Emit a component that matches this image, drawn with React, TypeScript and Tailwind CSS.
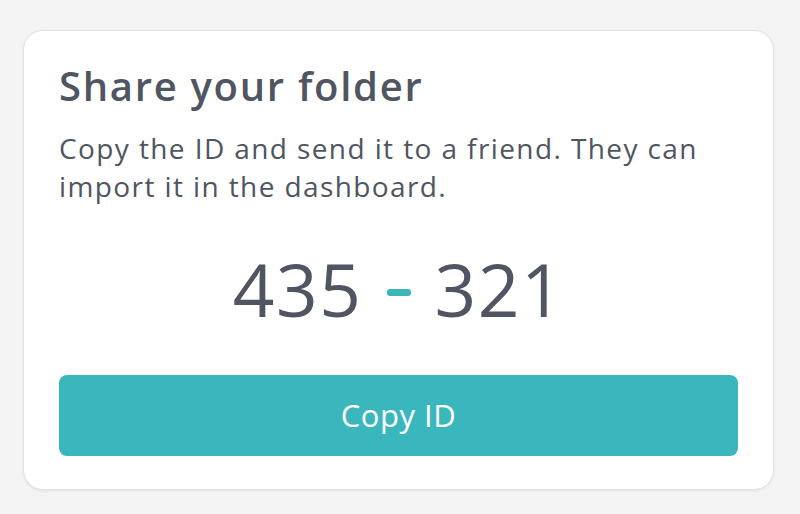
export default function App() {
  return (
    <div className="min-h-screen bg-[#f4f4f4] px-[23px] pt-[30px] font-['Open_Sans',sans-serif] text-[#4f5561]">
      <div className="w-[751px] h-[460px] rounded-[20px] bg-white border border-[#e2e2e2] shadow-[0_1px_3px_rgba(0,0,0,0.08)] px-[35px] pt-[31px]">
        <h1 className="text-[40px] leading-[48px] font-[560] tracking-[1.7px]">Share your folder</h1>
        <p className="mt-[19px] text-[28px] leading-[38px] tracking-[1.4px]">
          Copy the ID and send it to a friend. They can import it in the dashboard.
        </p>
        <div className="mt-[47px] flex items-center justify-center text-[73px] leading-[73px] tracking-[1.5px]">
          <span>435</span>
          <span className="mx-[24px] mt-[8px] inline-block w-[24px] h-[7px] rounded-[3px] bg-[#3ab7bd]" />
          <span>321</span>
        </div>
        <button className="mt-[50px] w-full h-[81px] rounded-[8px] bg-[#3ab7bd] text-white text-[31px] tracking-[0.5px]">
          Copy ID
        </button>
      </div>
    </div>
  );
}
